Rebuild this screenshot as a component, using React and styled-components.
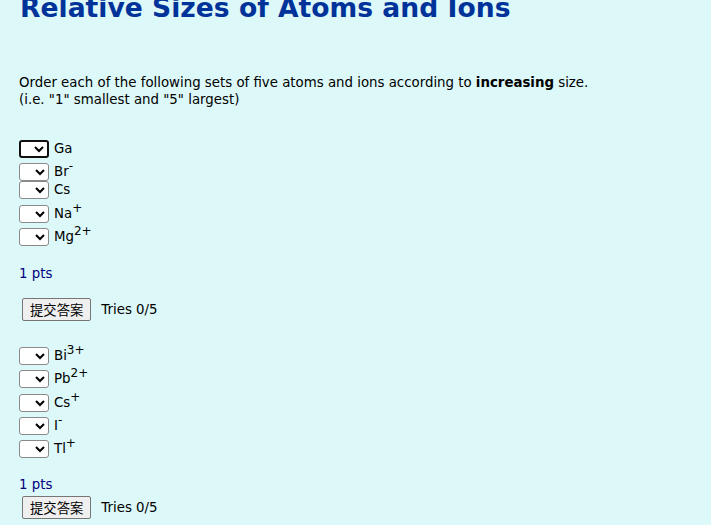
import styled, { createGlobalStyle } from 'styled-components';

const GlobalStyle = createGlobalStyle`
  html, body {
    margin: 0;
    padding: 0;
    background: #dcf8f8;
  }
  body {
    font-family: "DejaVu Sans", Verdana, sans-serif;
    font-size: 13.33px;
    color: #000;
  }
`;

const Page = styled.div`
  padding: 0 19px;
`;

const Title = styled.h1`
  margin: -9px 0 0 1px;
  font-size: 26.6px;
  font-weight: bold;
  color: #003399;
  line-height: 34px;
`;

const Intro = styled.p`
  margin: 49px 0 0;
  line-height: 17px;
`;

const ItemList = styled.div`
  display: flex;
  flex-direction: column;
  margin-top: ${({ $top }) => $top}px;
`;

const Row = styled.div`
  display: flex;
  align-items: flex-end;
  gap: 5px;
  height: ${({ $h }) => $h}px;
`;

const Picker = styled.select`
  width: 30px;
  height: 18px;
  margin: 0;
  padding: 0;
  font-size: 12px;
  background: #fff;
  border: ${({ $focused }) => ($focused ? '2px solid #101010' : '1px solid #8a8a8a')};
  border-radius: 3px;
  box-sizing: border-box;
`;

const Label = styled.span`
  line-height: 18px;

  sup {
    font-size: 12px;
    line-height: 0;
    vertical-align: 6px;
  }
`;

const Points = styled.div`
  color: #000080;
  margin-top: ${({ $top }) => $top}px;
  line-height: 16px;
`;

const SubmitRow = styled.div`
  display: flex;
  align-items: center;
  gap: 10px;
  margin: ${({ $top }) => $top}px 0 0 3px;
`;

const SubmitButton = styled.button`
  font-family: "Noto Sans CJK SC", sans-serif;
  font-size: 13.33px;
  height: 23px;
  padding: 0 7px;
  background: #efefef;
  border: 1px solid #767676;
  border-radius: 2px;
  color: #000;
  line-height: 1;
`;

const sets = [
  {
    top: 32,
    items: [
      { sym: 'Ga', h: 18 },
      { sym: 'Br', ch: '-', h: 23 },
      { sym: 'Cs', h: 18 },
      { sym: 'Na', ch: '+', h: 24 },
      { sym: 'Mg', ch: '2+', h: 23 },
    ],
    ptsTop: 20,
    btnTop: 16,
  },
  {
    top: 21,
    items: [
      { sym: 'Bi', ch: '3+', h: 23 },
      { sym: 'Pb', ch: '2+', h: 23 },
      { sym: 'Cs', ch: '+', h: 24 },
      { sym: 'I', ch: '-', h: 23 },
      { sym: 'Tl', ch: '+', h: 23 },
    ],
    ptsTop: 19,
    btnTop: 3,
  },
];

function QuestionSet({ set, first }) {
  return (
    <>
      <ItemList $top={set.top}>
        {set.items.map((it, i) => (
          <Row key={it.sym + i} $h={it.h}>
            <Picker $focused={first && i === 0} defaultValue="">
              <option value=""></option>
              <option>1</option>
              <option>2</option>
              <option>3</option>
              <option>4</option>
              <option>5</option>
            </Picker>
            <Label>
              {it.sym}
              {it.ch && <sup>{it.ch}</sup>}
            </Label>
          </Row>
        ))}
      </ItemList>
      <Points $top={set.ptsTop}>1 pts</Points>
      <SubmitRow $top={set.btnTop}>
        <SubmitButton>提交答案</SubmitButton>
        <span>Tries 0/5</span>
      </SubmitRow>
    </>
  );
}

export default function App() {
  return (
    <Page>
      <GlobalStyle />
      <Title>Relative Sizes of Atoms and Ions</Title>
      <Intro>
        Order each of the following sets of five atoms and ions according to <b>increasing</b> size.
        <br />
        (i.e. "1" smallest and "5" largest)
      </Intro>
      {sets.map((s, i) => (
        <QuestionSet key={i} set={s} first={i === 0} />
      ))}
    </Page>
  );
}
